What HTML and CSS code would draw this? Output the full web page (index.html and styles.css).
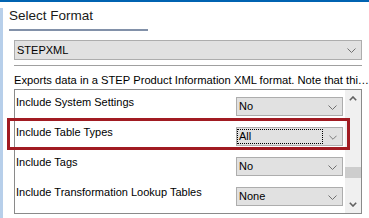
FILE: index.html
```html
<!DOCTYPE html>
<html lang="en">
<head>
  <meta charset="UTF-8">
  <title>Select Format</title>
  <link rel="stylesheet" href="styles.css">
</head>
<body>
  <div class="page">
    <div class="panel">
      <h2 class="title">Select Format</h2>
      <div class="content">
        <div class="select wide">
          <span class="value">STEPXML</span>
          <svg class="chev" width="9" height="5" viewBox="0 0 9 5"><path d="M0.5 0.5 L4.5 4.5 L8.5 0.5" fill="none" stroke="#707070" stroke-width="1"/></svg>
        </div>
        <div class="sep"></div>
        <p class="desc">Exports data in a STEP Product Information XML format. Note that thi…</p>

        <div class="settings">
          <div class="rows">
            <div class="row">
              <span class="label">Include System Settings</span>
              <div class="select">
                <span class="value">No</span>
                <svg class="chev" width="9" height="5" viewBox="0 0 9 5"><path d="M0.5 0.5 L4.5 4.5 L8.5 0.5" fill="none" stroke="#707070" stroke-width="1"/></svg>
              </div>
            </div>
            <div class="row">
              <span class="label">Include Table Types</span>
              <div class="select">
                <span class="value focus">All</span>
                <svg class="chev" width="9" height="5" viewBox="0 0 9 5"><path d="M0.5 0.5 L4.5 4.5 L8.5 0.5" fill="none" stroke="#707070" stroke-width="1"/></svg>
              </div>
            </div>
            <div class="row">
              <span class="label">Include Tags</span>
              <div class="select">
                <span class="value">No</span>
                <svg class="chev" width="9" height="5" viewBox="0 0 9 5"><path d="M0.5 0.5 L4.5 4.5 L8.5 0.5" fill="none" stroke="#707070" stroke-width="1"/></svg>
              </div>
            </div>
            <div class="row">
              <span class="label">Include Transformation Lookup Tables</span>
              <div class="select">
                <span class="value">None</span>
                <svg class="chev" width="9" height="5" viewBox="0 0 9 5"><path d="M0.5 0.5 L4.5 4.5 L8.5 0.5" fill="none" stroke="#707070" stroke-width="1"/></svg>
              </div>
            </div>
          </div>
          <div class="scrollbar">
            <div class="sb-btn">
              <svg width="8" height="5" viewBox="0 0 8 5"><path d="M0.8 4.2 L4 1 L7.2 4.2" fill="none" stroke="#606060" stroke-width="1.6"/></svg>
            </div>
            <div class="track"><div class="thumb"></div></div>
            <div class="sb-btn">
              <svg width="8" height="5" viewBox="0 0 8 5"><path d="M0.8 0.8 L4 4 L7.2 0.8" fill="none" stroke="#606060" stroke-width="1.6"/></svg>
            </div>
          </div>
        </div>
      </div>
    </div>
    <div class="highlight"></div>
  </div>
</body>
</html>
```

FILE: styles.css
```css
body {
  margin: 0;
  background: #fff;
  font-family: 'Liberation Sans', Arial, sans-serif;
  color: #000;
}
.page {
  position: relative;
  width: 369px;
  height: 218px;
  box-sizing: border-box;
  border-top: 2px solid #0063b1;
  overflow: hidden;
}
.panel {
  height: 216px;
  border-left: 3px solid #b7cfea;
  padding-left: 6px;
}
.title {
  margin: 6px 0 0;
  width: 139px;
  font-size: 13.5px;
  font-weight: normal;
  line-height: 16px;
  color: #1a1a1a;
  padding-bottom: 5px;
  border-bottom: 2px solid #8291a9;
}
.content {
  margin-left: 5px;
  width: 348px;
}
.select {
  display: flex;
  align-items: center;
  box-sizing: border-box;
  width: 107px;
  height: 19px;
  background: #e1e1e1;
  border: 1px solid #adadad;
  font-size: 11px;
  line-height: 15px;
}
.select .value {
  flex: 1;
  padding-left: 2px;
}
.select .chev {
  margin: 1px 5px 0 6px;
}
.select.wide {
  width: 348px;
  height: 20px;
  margin-top: 9px;
}
.select .focus {
  flex: none;
  box-sizing: border-box;
  width: 86px;
  height: 15px;
  margin-left: 0;
  padding-left: 1px;
  border: 1px dotted #000;
  line-height: 13px;
}
.sep {
  margin-top: 5px;
  height: 1px;
  background: #a0a0a0;
}
.desc {
  margin: 7px 0 0;
  font-size: 11.2px;
  line-height: 14px;
  white-space: nowrap;
}
.settings {
  display: flex;
  box-sizing: border-box;
  margin-top: 2px;
  height: 125px;
  border: 1px solid #8a8a8a;
}
.rows {
  flex: 1;
  padding-top: 1px;
}
.row {
  display: flex;
  align-items: flex-start;
  height: 30px;
}
.label {
  flex: 1;
  padding: 5px 0 0 1px;
  font-size: 11px;
  line-height: 13px;
}
.row .select {
  margin: 6px 2px 0 0;
}
.scrollbar {
  display: flex;
  flex-direction: column;
  width: 16px;
  background: #f0f0f0;
}
.sb-btn {
  display: flex;
  align-items: center;
  justify-content: center;
  height: 17px;
}
.track {
  flex: 1;
}
.thumb {
  margin-top: 60px;
  height: 11px;
  background: #cdcdcd;
}
.highlight {
  position: absolute;
  left: 7px;
  top: 116px;
  width: 343px;
  height: 32px;
  box-sizing: border-box;
  border: 3px solid #a11b22;
}
```
